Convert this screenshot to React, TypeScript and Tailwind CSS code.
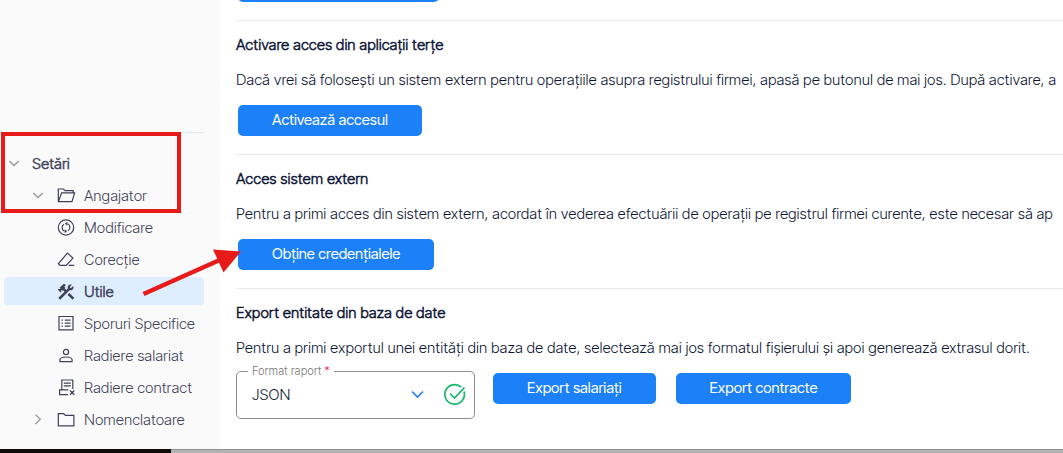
import React, { useState } from 'react';
import { MdConstruction } from 'react-icons/md';

type IconProps = {
  children: React.ReactNode;
};

const Icon = ({ children }: IconProps) => (
  <svg
    viewBox="0 0 20 20"
    className="size-5 shrink-0"
    fill="none"
    stroke="currentColor"
    strokeWidth="1.2"
    aria-hidden="true"
  >
    {children}
  </svg>
);

const FolderOpenIcon = () => (
  <Icon>
    <path d="M2.3 15.500V3h5.200l1.600 1.700h8v2.100M2.500 15.600 5.600 6.800h13L16 15.600H2.500Z" />
  </Icon>
);

const FolderIcon = () => (
  <Icon>
    <path d="M2.300 3.600h5.400l1.700 1.800h8.500v10.400H2.300V3.600Z" />
  </Icon>
);

const ChangeIcon = () => (
  <Icon>
    <circle cx="10" cy="9.500" r="7.700" />
    <path d="M8.400 13.200A3.900 3.900 0 0 1 8 6.300M11.600 5.800a3.900 3.900 0 0 1 .4 6.900" />
    <path d="M11.300 3.800v4L8.900 5.800ZM8.700 15.200v-4l2.400 2Z" fill="currentColor" stroke="none" />
  </Icon>
);

const EraserIcon = () => (
  <Icon>
    <path d="M4 15.400 2.300 13.800 11.400 3.100l5.600 5-6.800 7.300H4ZM12.600 15.400h5.700" />
  </Icon>
);

const ListIcon = () => (
  <Icon>
    <path d="M3 2.500h14v13.400H3V2.500Z" />
    <path d="M5.500 6.200h1.400M5.500 9.200h1.400M5.500 12.200h1.400M8.800 6.200h5.700M8.800 9.200h5.700M8.800 12.200h5.700" />
  </Icon>
);

const PersonIcon = () => (
  <Icon>
    <circle cx="10" cy="5.900" r="2.600" />
    <path d="M3.900 15.600V14c0-2 3.300-3 6.100-3s6.100 1 6.100 3v1.600H3.900Z" />
  </Icon>
);

const ContractIcon = () => (
  <Icon>
    <path d="M5.800 11.700V2h11v9M12 16.700H3.600v-4.800h8.700M7.800 5.200h7M7.800 7.800h7" />
    <path d="m14 12.600 4.300 4.100M18.300 12.600 14 16.700" strokeWidth="1.400" />
  </Icon>
);

const Chevron = ({ open }: { open: boolean }) => (
  <svg
    viewBox="0 0 20 20"
    className="size-5 shrink-0 text-[#969696]"
    fill="none"
    stroke="currentColor"
    strokeWidth="1.3"
    aria-hidden="true"
  >
    <path d={open ? 'M5.300 7 10 11.500l4.700-4.500' : 'M7.500 4.600 12.300 9.300l-4.800 4.700'} />
  </svg>
);

const items = [
  { label: 'Modificare', icon: <ChangeIcon /> },
  { label: 'Corecție', icon: <EraserIcon /> },
  {
    label: 'Utile',
    icon: <MdConstruction className="size-5 shrink-0" aria-hidden="true" />,
    active: true,
  },
  { label: 'Sporuri Specifice', icon: <ListIcon /> },
  { label: 'Radiere salariat', icon: <PersonIcon /> },
  { label: 'Radiere contract', icon: <ContractIcon /> },
];

const Sidebar = () => (
  <aside className="w-[220px] shrink-0 bg-[#fafafa] pr-4 pl-1 pb-4 flex flex-col justify-end text-[#3f4259]">
    <nav className="border-t border-[#e6e6e6] pt-4 flex flex-col gap-1">
      <button
        className="h-7 pt-0.5 flex items-center gap-2 [-webkit-text-stroke:0.5px]"
        aria-expanded="true"
      >
        <Chevron open />
        Setări
      </button>
      <button className="h-7 pt-0.5 pl-6 flex items-center gap-2" aria-expanded="true">
        <Chevron open />
        <FolderOpenIcon />
        Angajator
      </button>
      {items.map((item) => (
        <a
          key={item.label}
          href="#"
          className={
            item.active
              ? 'h-7 pt-0.5 pl-[52px] flex items-center gap-2 whitespace-nowrap rounded bg-[#deeeff] [-webkit-text-stroke:0.5px]'
              : 'h-7 pt-0.5 pl-[52px] flex items-center gap-2 whitespace-nowrap rounded'
          }
        >
          {item.icon}
          {item.label}
        </a>
      ))}
      <button className="h-7 pt-0.5 pl-6 flex items-center gap-2" aria-expanded="false">
        <Chevron open={false} />
        <FolderIcon />
        Nomenclatoare
      </button>
    </nav>
  </aside>
);

const Button = ({ children }: { children: React.ReactNode }) => (
  <button className="h-[31px] px-[34px] rounded-[5px] bg-[#1c80f9] hover:bg-blue-600 text-white font-normal whitespace-nowrap">
    {children}
  </button>
);

type SectionProps = {
  title: string;
  text: string;
  children: React.ReactNode;
};

const Section = ({ title, text, children }: SectionProps) => (
  <section className="border-t border-[#e9eaec] pt-3.5">
    <h2 className="leading-5 [-webkit-text-stroke:0.5px]">{title}</h2>
    <p className="mt-[15px] leading-5 whitespace-nowrap">{text}</p>
    {children}
  </section>
);

const FormatSelect = () => {
  const [format, setFormat] = useState('JSON');
  return (
    <fieldset className="w-[239px] h-14 border border-[#8c8c8c] rounded-[5px] px-[11px] flex flex-col">
      <legend className="px-1 text-[11px] leading-4 text-[#777777] font-['Inter',sans-serif]">
        <label htmlFor="format">
          Format raport <span className="text-rose-600">*</span>
        </label>
      </legend>
      <div className="h-8 relative flex items-center">
        <select
          id="format"
          value={format}
          onChange={(e) => setFormat(e.target.value)}
          className="w-full h-8 pl-1 appearance-none bg-transparent focus:outline-none"
        >
          <option>JSON</option>
          <option>XML</option>
          <option>CSV</option>
        </select>
        <svg
          viewBox="0 0 60 24"
          className="absolute -right-1.5 w-[60px] h-6 pointer-events-none"
          fill="none"
          aria-hidden="true"
        >
          <path d="M3 8.500 8.500 14 14 8.500" stroke="#1c80f9" strokeWidth="1.600" />
          <path
            d="M52.300 4.200A9.800 9.800 0 1 0 55 8.500M41 10.500l4.500 4.500L55.500 4.500"
            stroke="#12b76a"
            strokeWidth="1.700"
          />
        </svg>
      </div>
    </fieldset>
  );
};

export default function App() {
  return (
    <div className="relative min-h-screen overflow-hidden flex flex-col bg-white font-['Inter_Tight','Inter',sans-serif] font-light text-[15px] text-[#0b1433]">
      <div className="flex-1 flex">
        <Sidebar />
        <main className="flex-1 min-w-0 pl-4 overflow-hidden">
          <div className="-mt-[29px] mb-[18px] pl-0.5 flex">
            <button
              className="w-[201px] h-[31px] rounded-[5px] bg-[#1c80f9] hover:bg-blue-600"
              aria-label="Descarcă registrul"
            />
          </div>
          <Section
            title="Activare acces din aplicații terțe"
            text="Dacă vrei să folosești un sistem extern pentru operațiile asupra registrului firmei, apasă pe butonul de mai jos. După activare, a"
          >
            <div className="pt-[15px] pb-[18px] pl-0.5">
              <Button>Activează accesul</Button>
            </div>
          </Section>
          <Section
            title="Acces sistem extern"
            text="Pentru a primi acces din sistem extern, acordat în vederea efectuării de operații pe registrul firmei curente, este necesar să ap"
          >
            <div className="pt-[15px] pb-[18px] pl-0.5">
              <Button>Obține credențialele</Button>
            </div>
          </Section>
          <Section
            title="Export entitate din baza de date"
            text="Pentru a primi exportul unei entități din baza de date, selectează mai jos formatul fișierului și apoi generează extrasul dorit."
          >
            <div className="mt-[5px] flex items-start">
              <FormatSelect />
              <div className="mt-2.5 ml-[18px] flex gap-5">
                <Button>Export salariați</Button>
                <Button>Export contracte</Button>
              </div>
            </div>
          </Section>
        </main>
      </div>
      <div className="h-1 flex">
        <div className="w-[171px] bg-[#0d0907]" />
        <div className="flex-1 bg-[#b3b3b3] border-t border-[#8f8f8f]" />
      </div>

      {/* highlights */}
      <div className="absolute left-px top-[132px] w-[180px] h-[81px] border-4 border-[#e81b1b] pointer-events-none" />
      <svg
        viewBox="0 0 100 50"
        className="absolute left-[142px] top-[248px] w-[100px] h-[50px] pointer-events-none"
        aria-hidden="true"
      >
        <path d="M1.500 46 80 11" stroke="#e81b1b" strokeWidth="4.500" />
        <path d="M71 1.500 99 3.500 81.500 24.500Z" fill="#e81b1b" />
      </svg>
    </div>
  );
}
